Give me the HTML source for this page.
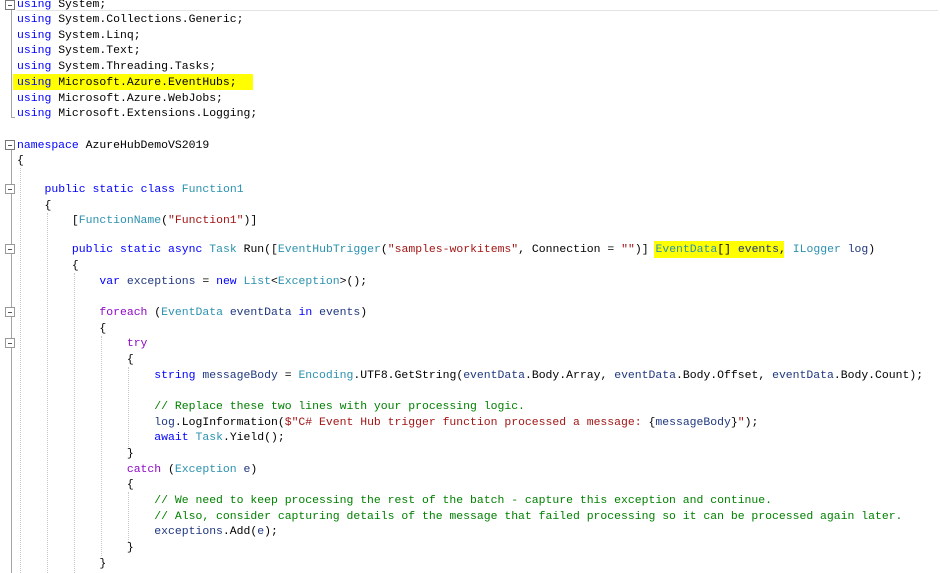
<!DOCTYPE html>
<html><head><meta charset="utf-8"><style>
body{margin:0;width:940px;height:573px;overflow:hidden;background:#fff;position:relative;font-family:"Liberation Mono",monospace;font-size:11.45px;}
.l{position:absolute;left:17px;white-space:pre;height:16px;line-height:16px;color:#000;margin-top:1px}
.k{color:#0000ff}.t{color:#2b91af}.c{color:#8f08c4}.s{color:#a31515}.g{color:#008000}.p{color:#1f377f}
.hl{background:#ffff00}
.g1{position:absolute;border-left:1px dotted #c8c8c8;width:0}
.box{position:absolute;left:5px;width:8px;height:8px;border:1px solid #999;background:#fff}
.box:after{content:"";position:absolute;left:2px;top:3.5px;width:4px;height:1px;background:#555}
.vl{position:absolute;left:11px;width:1px;background:#a5a5a5}
</style></head><body>
<div style="position:absolute;left:17px;top:10px;width:921px;height:1px;background:#e4e4e4"></div>
<div class="hl" style="position:absolute;left:13px;top:74px;width:240px;height:16px"></div>
<div class="hl" style="position:absolute;left:654px;top:241px;width:130px;height:17px"></div>
<div class="vl" style="top:10px;height:108px"></div>
<div style="position:absolute;left:11px;top:117px;width:4px;height:1px;background:#a5a5a5"></div>
<div class="vl" style="top:150px;height:423px"></div>
<div class="box" style="top:0px;border-color:#777"></div>
<div class="box" style="top:140px;border-color:#777"></div>
<div class="box" style="top:184px"></div>
<div class="box" style="top:244px"></div>
<div class="box" style="top:307px"></div>
<div class="box" style="top:338px"></div>
<div class="g1" style="left:20px;top:168px;height:405px"></div>
<div class="g1" style="left:47px;top:213px;height:360px"></div>
<div class="g1" style="left:74px;top:273px;height:300px"></div>
<div class="g1" style="left:101px;top:336px;height:220px"></div>
<div class="g1" style="left:128px;top:367px;height:80px"></div>
<div class="g1" style="left:128px;top:492px;height:50px"></div>

<div class="l" style="top:-4px"><span class="k">using</span> System;</div>
<div class="l" style="top:11px"><span class="k">using</span> System.Collections.Generic;</div>
<div class="l" style="top:27px"><span class="k">using</span> System.Linq;</div>
<div class="l" style="top:42px"><span class="k">using</span> System.Text;</div>
<div class="l" style="top:58px"><span class="k">using</span> System.Threading.Tasks;</div>
<div class="l" style="top:74px"><span class="k">using</span> Microsoft.Azure.EventHubs;</div>
<div class="l" style="top:90px"><span class="k">using</span> Microsoft.Azure.WebJobs;</div>
<div class="l" style="top:105px"><span class="k">using</span> Microsoft.Extensions.Logging;</div>
<div class="l" style="top:137px"><span class="k">namespace</span> AzureHubDemoVS2019</div>
<div class="l" style="top:152px">{</div>
<div class="l" style="top:181px">    <span class="k">public</span> <span class="k">static</span> <span class="k">class</span> <span class="t">Function1</span></div>
<div class="l" style="top:197px">    {</div>
<div class="l" style="top:212px">        [<span class="t">FunctionName</span>(<span class="s">"Function1"</span>)]</div>
<div class="l" style="top:241px">        <span class="k">public</span> <span class="k">static</span> <span class="k">async</span> <span class="t">Task</span> Run([<span class="t">EventHubTrigger</span>(<span class="s">"samples-workitems"</span>, Connection = <span class="s">""</span>)] <span class="t">EventData</span>[] <span class="p">events</span>, <span class="t">ILogger</span> <span class="p">log</span>)</div>
<div class="l" style="top:257px">        {</div>
<div class="l" style="top:273px">            <span class="k">var</span> <span class="p">exceptions</span> = <span class="k">new</span> <span class="t">List</span>&lt;<span class="t">Exception</span>&gt;();</div>
<div class="l" style="top:304px">            <span class="c">foreach</span> (<span class="t">EventData</span> <span class="p">eventData</span> <span class="k">in</span> <span class="p">events</span>)</div>
<div class="l" style="top:320px">            {</div>
<div class="l" style="top:335px">                <span class="c">try</span></div>
<div class="l" style="top:351px">                {</div>
<div class="l" style="top:367px">                    <span class="k">string</span> <span class="p">messageBody</span> = <span class="t">Encoding</span>.UTF8.GetString(<span class="p">eventData</span>.Body.Array, <span class="p">eventData</span>.Body.Offset, <span class="p">eventData</span>.Body.Count);</div>
<div class="l" style="top:398px">                    <span class="g">// Replace these two lines with your processing logic.</span></div>
<div class="l" style="top:414px">                    <span class="p">log</span>.LogInformation(<span class="s">$"C# Event Hub trigger function processed a message: </span>{<span class="p">messageBody</span>}<span class="s">"</span>);</div>
<div class="l" style="top:429px">                    <span class="k">await</span> <span class="t">Task</span>.Yield();</div>
<div class="l" style="top:445px">                }</div>
<div class="l" style="top:461px">                <span class="c">catch</span> (<span class="t">Exception</span> <span class="p">e</span>)</div>
<div class="l" style="top:476px">                {</div>
<div class="l" style="top:492px">                    <span class="g">// We need to keep processing the rest of the batch - capture this exception and continue.</span></div>
<div class="l" style="top:508px">                    <span class="g">// Also, consider capturing details of the message that failed processing so it can be processed again later.</span></div>
<div class="l" style="top:523px">                    <span class="p">exceptions</span>.Add(<span class="p">e</span>);</div>
<div class="l" style="top:539px">                }</div>
<div class="l" style="top:555px">            }</div>
</body></html>
